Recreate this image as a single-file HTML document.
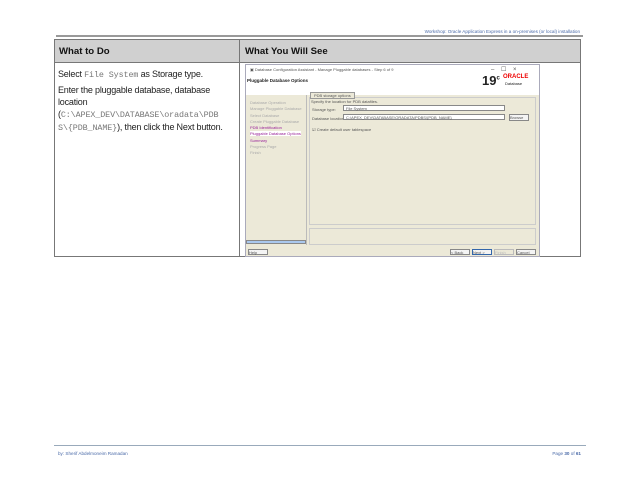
<!DOCTYPE html>
<html><head><meta charset="utf-8"><style>
*{margin:0;padding:0;box-sizing:border-box}
body{width:638px;height:493px;background:#fff;position:relative;font-family:"Liberation Sans",sans-serif;overflow:hidden}
.a{position:absolute}
.mono{font-family:"Liberation Mono",monospace;color:#777;font-size:8.4px;letter-spacing:-0.1px}
.t{font-size:9px;color:#222;line-height:12px;letter-spacing:-0.2px}
.s{font-size:4px;color:#555;white-space:nowrap}
</style></head><body>
<div class="a" style="right:58px;top:29px;font-size:4.6px;color:#4a6aa8">Workshop: Oracle Application Express in a on-premises (or local) installation</div>
<div class="a" style="left:56px;top:35px;width:527px;height:2px;background:#999"></div>
<div class="a" style="left:54px;top:39px;width:527px;height:218px;border:1px solid #777"></div>
<div class="a" style="left:55px;top:40px;width:525px;height:23px;background:#d0d0d0;border-bottom:1px solid #777"></div>
<div class="a" style="left:239px;top:40px;width:1px;height:216px;background:#777"></div>
<div class="a" style="left:59px;top:46px;font-size:9.6px;font-weight:bold;color:#111">What to Do</div>
<div class="a" style="left:245px;top:46px;font-size:9.6px;font-weight:bold;color:#111">What You Will See</div>
<div class="a t" style="left:58px;top:68px;white-space:nowrap">Select <span class="mono">File System</span> as Storage type.</div>
<div class="a t" style="left:58px;top:84px;width:180px">Enter the pluggable database, database<br>location<br>(<span class="mono">C:\APEX_DEV\DATABASE\oradata\PDB</span><br><span style="white-space:nowrap"><span class="mono">S\{PDB_NAME}</span>), then click the Next button.</span></div>
<!-- screenshot -->
<div class="a" style="left:245px;top:64px;width:295px;height:193px;background:#ece9d8;border:1px solid #aab"></div>
<div class="a" style="left:246px;top:65px;width:293px;height:30px;background:#fff"></div>
<div class="a s" style="left:250px;top:67px">▣ Database Configuration Assistant - Manage Pluggable databases - Step 6 of 9</div>
<div class="a s" style="left:491px;top:66px;font-size:6px">–&nbsp;&nbsp;&nbsp;&nbsp;☐&nbsp;&nbsp;&nbsp;&nbsp;×</div>
<div class="a" style="left:247px;top:78px;font-size:4.5px;font-weight:bold;color:#222">Pluggable Database Options</div>
<div class="a" style="left:482px;top:73px;font-size:13px;font-weight:bold;color:#222">19<sup style="font-size:6px">c</sup></div>
<div class="a" style="left:503px;top:74px;font-size:6px;color:#e00;font-weight:bold">ORACLE</div>
<div class="a" style="left:505px;top:81px;font-size:4px;color:#222">Database</div>
<div class="a" style="left:306px;top:95px;width:1px;height:150px;background:#bbb"></div>
<div class="a s" style="left:250px;top:100px;line-height:6.3px;color:#aaa">Database Operation<br>Manage Pluggable Database<br>Select Database<br>Create Pluggable Database<br><span style="color:#929">PDB Identification</span><br><span style="color:#929;background:#fff">Pluggable Database Options</span><br><span style="color:#929">Summary</span><br>Progress Page<br>Finish</div>
<div class="a" style="left:246px;top:240px;width:60px;height:4px;background:#aac8ee;border:1px solid #888"></div>
<div class="a" style="left:309px;top:97px;width:227px;height:128px;border:1px solid #ccc"></div>
<div class="a s" style="left:310px;top:92px;background:#ece9d8;border:1px solid #999;padding:0 3px">PDB storage options</div>
<div class="a s" style="left:311px;top:99px">Specify the location for PDB datafiles.</div>
<div class="a s" style="left:312px;top:107px">Storage type:</div>
<div class="a s" style="left:343px;top:105px;width:162px;height:6px;background:#fff;border:1px solid #888;padding-left:2px">File System</div>
<div class="a s" style="left:312px;top:116px">Database location:</div>
<div class="a s" style="left:343px;top:114px;width:162px;height:6px;background:#fff;border:1px solid #888;padding-left:2px">C:\APEX_DEV\DATABASE\ORADATA\PDBS\{PDB_NAME}</div>
<div class="a s" style="left:509px;top:114px;width:20px;height:7px;border:1px solid #888;background:#f4f4f4">Browse</div>
<div class="a s" style="left:312px;top:127px">☑ Create default user tablespace</div>
<div class="a" style="left:309px;top:228px;width:227px;height:17px;border:1px solid #ccc"></div>
<div class="a s" style="left:248px;top:249px;width:20px;height:6px;border:1px solid #888;background:#f4f4f4">Help</div>
<div class="a s" style="left:450px;top:249px;width:20px;height:6px;border:1px solid #888;background:#f4f4f4">&lt; Back</div>
<div class="a s" style="left:472px;top:249px;width:20px;height:6px;border:1px solid #36a;background:#f4f4f4">Next &gt;</div>
<div class="a s" style="left:494px;top:249px;width:20px;height:6px;border:1px solid #bbb;color:#bbb">Finish</div>
<div class="a s" style="left:516px;top:249px;width:20px;height:6px;border:1px solid #888;background:#f4f4f4">Cancel</div>
<!-- footer -->
<div class="a" style="left:54px;top:445px;width:532px;height:1px;background:#9ab"></div>
<div class="a" style="left:58px;top:451px;font-size:4.6px;color:#4a6aa8">by: Sherif Abdelmoneim Ramadan</div>
<div class="a" style="right:57px;top:451px;font-size:4.6px;color:#4a6aa8">Page <b>30</b> of <b>61</b></div>
</body></html>
